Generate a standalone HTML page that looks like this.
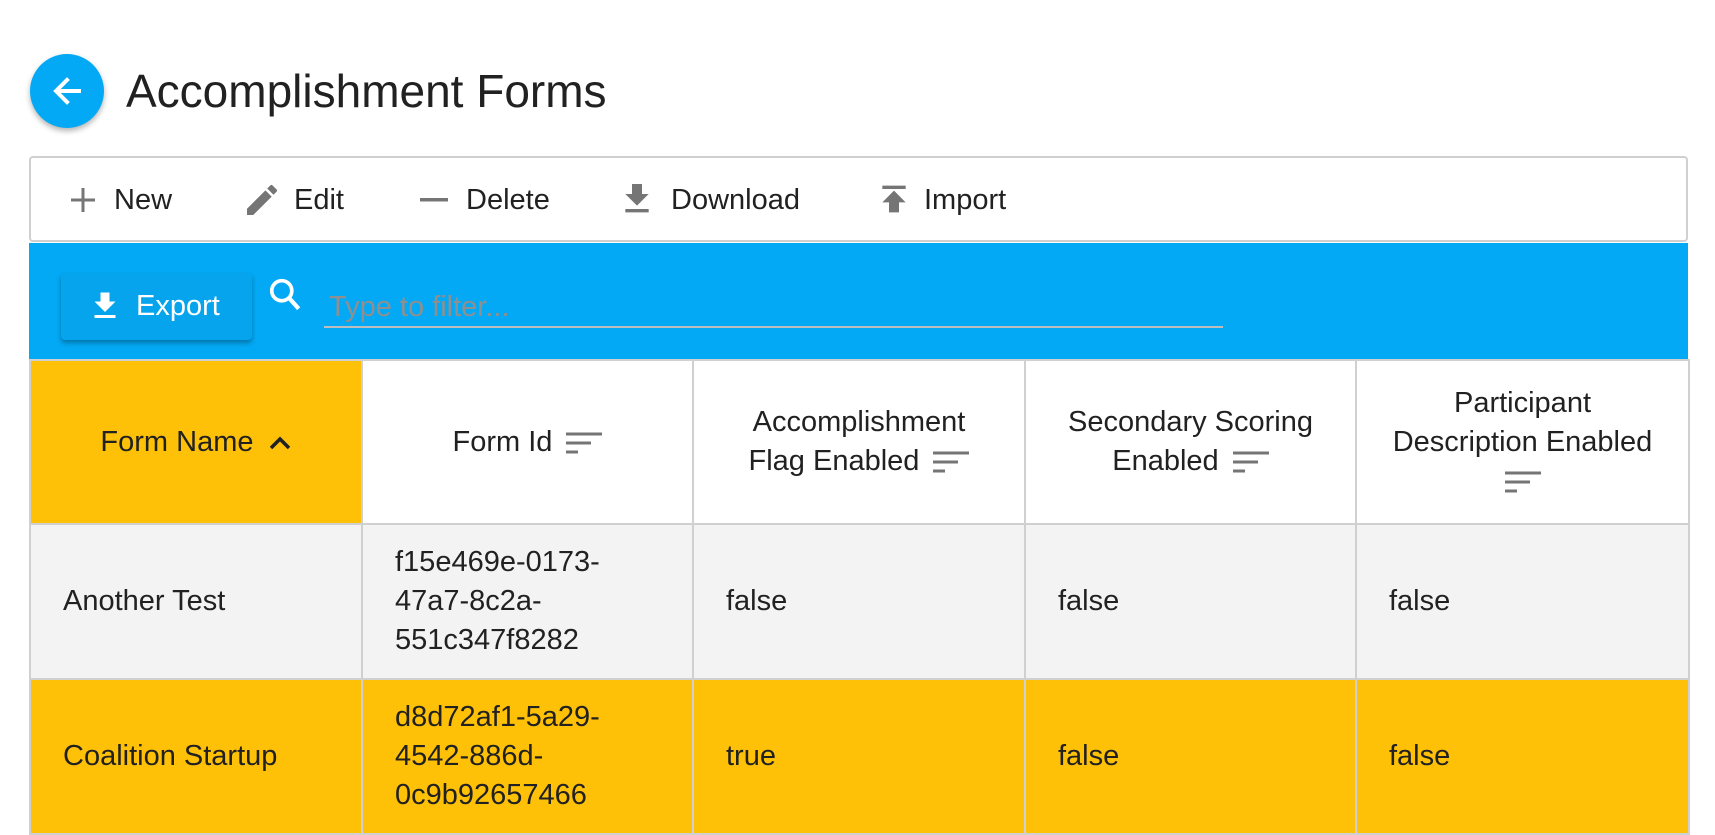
<!DOCTYPE html>
<html><head><meta charset="utf-8"><style>
*{margin:0;padding:0;box-sizing:border-box}
body{width:1715px;height:831px;overflow:hidden;background:#fff;font-family:"Liberation Sans",Arial,sans-serif;color:#212121;position:relative}
.abs{position:absolute}
.back{left:30px;top:54px;width:74px;height:74px;border-radius:50%;background:#03A9F4;box-shadow:0 3px 6px rgba(0,0,0,.3)}
.title{left:126px;top:64px;font-size:46px;line-height:54px;color:#212121}
.tb{left:29px;top:156px;width:1659px;height:86px;border:2px solid #d0d0d0;border-radius:4px;background:#fff}
.ti{position:absolute;top:181px;font-size:29px;line-height:38px;color:#212121}
.blue{left:29px;top:243px;width:1659px;height:116px;background:#03A9F4}
.exp{left:61px;top:273px;width:191px;height:67px;background:#06a4ec;border-radius:4px;box-shadow:0 3px 5px rgba(0,0,0,.3);color:#fff;font-size:29px}
.inp{left:324px;top:288px;width:899px;height:40px;border-bottom:2px solid #bdbdbd;color:#8f8f8f;font-size:29px;line-height:38px;padding-left:5px}
table{position:absolute;left:29px;top:359px;border-collapse:collapse;table-layout:fixed;width:1659px}
td{border:2px solid #d0d0d0;font-size:29px;line-height:39px;padding:0 0 0 32px;vertical-align:middle}
th{border:2px solid #d0d0d0;font-size:29px;line-height:39px;font-weight:normal;text-align:center;vertical-align:middle;height:164px;background:#fff}
.am{background:#FFC107}
.gr{background:#f3f3f3}
.s{display:inline-block;vertical-align:middle;margin-left:6px}
</style></head><body>
<div class="abs back"><svg width="74" height="74" viewBox="0 0 74 74"><path d="M49 37H27M37 26L26 37L37 48" stroke="#fff" stroke-width="4" fill="none" stroke-linecap="square"/></svg></div>
<div class="abs title">Accomplishment Forms</div>
<div class="abs tb"></div>
<svg class="abs" style="left:69px;top:186px" width="28" height="28"><path d="M14 2V26M2 14H26" stroke="#757575" stroke-width="3"/></svg>
<div class="ti" style="left:114px">New</div>
<svg class="abs" style="left:242px;top:180px" width="40" height="40" viewBox="0 0 24 24"><path fill="#757575" d="M3 17.25V21h3.75L17.81 9.94l-3.75-3.75L3 17.25zM20.71 7.04a1 1 0 000-1.41l-2.34-2.34a1 1 0 00-1.41 0l-1.83 1.83 3.75 3.75 1.83-1.83z"/></svg>
<div class="ti" style="left:294px">Edit</div>
<svg class="abs" style="left:420px;top:198px" width="30" height="6"><rect width="28" height="3.5" fill="#757575"/></svg>
<div class="ti" style="left:466px">Delete</div>
<svg class="abs" style="left:617px;top:178px" width="40" height="42" viewBox="0 0 24 24"><path fill="#757575" d="M19 9h-4V3H9v6H5l7 7 7-7zM5 18v2h14v-2H5z"/></svg>
<div class="ti" style="left:671px">Download</div>
<svg class="abs" style="left:874px;top:178px" width="40" height="42" viewBox="0 0 24 24"><path fill="#757575" d="M5 4v2h14V4H5zm0 10h4v6h6v-6h4l-7-7-7 7z"/></svg>
<div class="ti" style="left:924px">Import</div>
<div class="abs blue"></div>
<div class="abs exp"><svg style="position:absolute;left:26px;top:14px" width="36" height="38" viewBox="0 0 24 24"><path fill="#fff" d="M19 9h-4V3H9v6H5l7 7 7-7zM5 18v2h14v-2H5z"/></svg><span style="position:absolute;left:75px;top:14px;line-height:38px">Export</span></div>
<svg class="abs" style="left:267px;top:277px" width="38" height="38" viewBox="0 0 34 36"><circle cx="13" cy="13" r="9.5" stroke="#fff" stroke-width="3.5" fill="none"/><path d="M20 20L29 30" stroke="#fff" stroke-width="4"/></svg>
<div class="abs inp">Type to filter...</div>
<table>
<colgroup><col style="width:332px"><col style="width:331px"><col style="width:332px"><col style="width:331px"><col style="width:333px"></colgroup>
<tr>
<th class="am">Form Name <svg class="s" width="24" height="16"><path d="M3 13L12 4L21 13" stroke="#212121" stroke-width="3.5" fill="none"/></svg></th>
<th>Form Id <svg class="s" width="36" height="24"><path d="M0 3H36M0 12H25M0 21H12" stroke="#757575" stroke-width="3"/></svg></th>
<th>Accomplishment<br>Flag Enabled <svg class="s" width="36" height="24"><path d="M0 3H36M0 12H25M0 21H12" stroke="#757575" stroke-width="3"/></svg></th>
<th>Secondary Scoring<br>Enabled <svg class="s" width="36" height="24"><path d="M0 3H36M0 12H25M0 21H12" stroke="#757575" stroke-width="3"/></svg></th>
<th>Participant<br>Description Enabled<br><svg class="s" style="margin:0" width="36" height="28"><path d="M0 5H36M0 14H25M0 23H12" stroke="#757575" stroke-width="3"/></svg></th>
</tr>
<tr class="gr" style="height:155px">
<td>Another Test</td><td>f15e469e-0173-<br>47a7-8c2a-<br>551c347f8282</td><td>false</td><td>false</td><td>false</td>
</tr>
<tr class="am" style="height:155px">
<td>Coalition Startup</td><td>d8d72af1-5a29-<br>4542-886d-<br>0c9b92657466</td><td>true</td><td>false</td><td>false</td>
</tr>
</table>
</body></html>
